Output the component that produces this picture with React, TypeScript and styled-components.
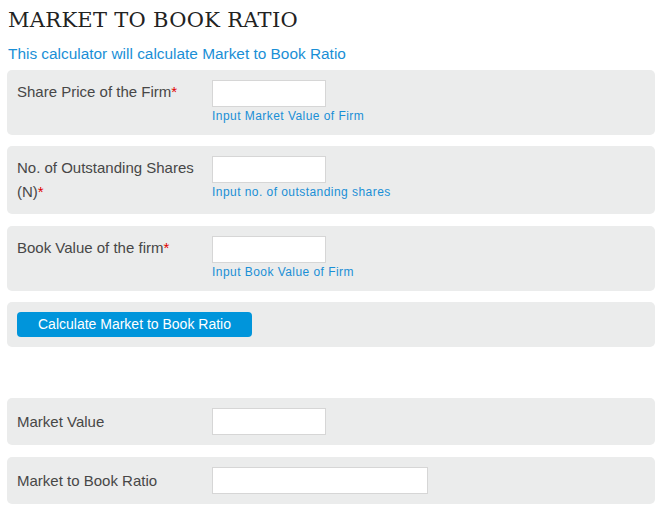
import styled, { createGlobalStyle } from "styled-components";

const GlobalStyle = createGlobalStyle`
  body {
    margin: 0;
    background: #ffffff;
    font-family: "Liberation Sans", Arial, sans-serif;
  }
`;

const Page = styled.div`
  width: 662px;
  padding: 6px 7px 0 7px;
  box-sizing: border-box;
`;

const Title = styled.h1`
  margin: 0 0 0 1px;
  font-family: "DejaVu Serif", "Liberation Serif", serif;
  font-weight: normal;
  font-size: 21px;
  line-height: 28px;
  color: #222222;
  letter-spacing: 0.3px;
`;

const Subtitle = styled.p`
  margin: 10px 0 0 1px;
  font-size: 15.4px;
  line-height: 20px;
  color: #1a8fd6;
`;

const Form = styled.div`
  margin-top: 6px;
  display: flex;
  flex-direction: column;
  gap: 11.33px;
`;

const Panel = styled.div<{ $spaced?: boolean }>`
  display: flex;
  align-items: flex-start;
  background: #ebecec;
  border-radius: 5px;
  padding: 10px;
  margin-top: ${(p) => (p.$spaced ? "40px" : "0")};
`;

const Label = styled.div`
  width: 195px;
  flex-shrink: 0;
  font-size: 15px;
  line-height: 24px;
  color: #474747;
`;

const OneLine = styled(Label)`
  line-height: 27px;
`;

const Star = styled.span`
  color: #e00000;
`;

const Field = styled.div`
  display: flex;
  flex-direction: column;
`;

const Input = styled.input<{ $wide?: boolean }>`
  width: ${(p) => (p.$wide ? "216px" : "114px")};
  height: 27px;
  box-sizing: border-box;
  border: 1px solid #d6d6d6;
  background: #ffffff;
  margin: 0;
  padding: 0 4px;
  outline: none;
`;

const Hint = styled.span`
  font-size: 12px;
  line-height: 18px;
  color: #1a8fd6;
  letter-spacing: 0.45px;
`;

const Button = styled.button`
  width: 235px;
  height: 25px;
  border: none;
  border-radius: 4px;
  background: #0095db;
  color: #ffffff;
  font-family: "Liberation Sans", Arial, sans-serif;
  font-size: 14px;
  padding: 0;
  cursor: pointer;
`;

export default function App() {
  return (
    <Page>
      <GlobalStyle />
      <Title>MARKET TO BOOK RATIO</Title>
      <Subtitle>This calculator will calculate Market to Book Ratio</Subtitle>
      <Form>
        <Panel>
          <Label>
            Share Price of the Firm<Star>*</Star>
          </Label>
          <Field>
            <Input />
            <Hint>Input Market Value of Firm</Hint>
          </Field>
        </Panel>
        <Panel>
          <Label>
            No. of Outstanding Shares (N)<Star>*</Star>
          </Label>
          <Field>
            <Input />
            <Hint>Input no. of outstanding shares</Hint>
          </Field>
        </Panel>
        <Panel>
          <Label>
            Book Value of the firm<Star>*</Star>
          </Label>
          <Field>
            <Input />
            <Hint>Input Book Value of Firm</Hint>
          </Field>
        </Panel>
        <Panel>
          <Button>Calculate Market to Book Ratio</Button>
        </Panel>
        <Panel $spaced>
          <OneLine>Market Value</OneLine>
          <Input />
        </Panel>
        <Panel>
          <OneLine>Market to Book Ratio</OneLine>
          <Input $wide />
        </Panel>
      </Form>
    </Page>
  );
}
